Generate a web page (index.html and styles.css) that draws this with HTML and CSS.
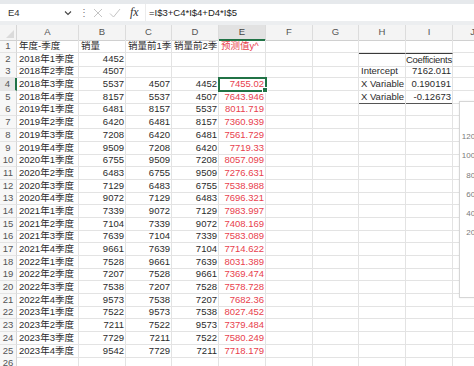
FILE: index.html
```html
<!DOCTYPE html>
<html lang="zh">
<head>
<meta charset="utf-8">
<title>Sheet</title>
<link rel="stylesheet" href="styles.css">
</head>
<body>
<div class="topstrip"></div>
<div class="fbar">
  <div class="namebox">E4</div>
  <svg class="chev" width="8" height="6" viewBox="0 0 8 6"><path d="M1 1.5 L4 4.5 L7 1.5" fill="none" stroke="#444" stroke-width="1.1"/></svg>
  <span class="dots">⋮</span>
  <svg class="ico" width="10" height="10" viewBox="0 0 10 10"><path d="M1 1 L9 9 M9 1 L1 9" stroke="#c4c4c4" stroke-width="1"/></svg>
  <svg class="ico" width="12" height="10" viewBox="0 0 12 10"><path d="M1 5.5 L4.5 9 L11 1" fill="none" stroke="#c4c4c4" stroke-width="1"/></svg>
  <span class="fx">fx</span>
  <div class="formula">=I$3+C4*I$4+D4*I$5</div>
</div>
<div class="band"></div>
<div class="sheet">
  <div class="row head"><span class="corner"></span><span class="ch">A</span><span class="ch">B</span><span class="ch">C</span><span class="ch">D</span><span class="ch sel">E</span><span class="ch">F</span><span class="ch">G</span><span class="ch">H</span><span class="ch">I</span><span class="ch">J</span></div>
  <div class="row"><span class="rn">1</span><span class="c">年度-季度</span><span class="c">销量</span><span class="c">销量前1季</span><span class="c">销量前2季</span><span class="c red">预测值y^</span><span class="c"></span><span class="c"></span><span class="c"></span><span class="c"></span><span class="c"></span></div>
  <div class="row"><span class="rn">2</span><span class="c">2018年1季度</span><span class="c n">4452</span><span class="c"></span><span class="c"></span><span class="c"></span><span class="c"></span><span class="c"></span><span class="c tt"></span><span class="c tt n coef">Coefficients</span><span class="c"></span></div>
  <div class="row"><span class="rn">3</span><span class="c">2018年2季度</span><span class="c n">4507</span><span class="c"></span><span class="c"></span><span class="c"></span><span class="c"></span><span class="c"></span><span class="c">Intercept</span><span class="c n">7162.011</span><span class="c"></span></div>
  <div class="row"><span class="rn sel">4</span><span class="c">2018年3季度</span><span class="c n">5537</span><span class="c n">4507</span><span class="c n">4452</span><span class="c n red active">7455.02</span><span class="c"></span><span class="c"></span><span class="c">X Variable</span><span class="c n">0.190191</span><span class="c"></span></div>
  <div class="row"><span class="rn">5</span><span class="c">2018年4季度</span><span class="c n">8157</span><span class="c n">5537</span><span class="c n">4507</span><span class="c n red">7643.946</span><span class="c"></span><span class="c"></span><span class="c tb">X Variable</span><span class="c n tb">-0.12673</span><span class="c"></span></div>
  <div class="row"><span class="rn">6</span><span class="c">2019年1季度</span><span class="c n">6481</span><span class="c n">8157</span><span class="c n">5537</span><span class="c n red">8011.719</span><span class="c"></span><span class="c"></span><span class="c"></span><span class="c"></span><span class="c"></span></div>
  <div class="row"><span class="rn">7</span><span class="c">2019年2季度</span><span class="c n">6420</span><span class="c n">6481</span><span class="c n">8157</span><span class="c n red">7360.939</span><span class="c"></span><span class="c"></span><span class="c"></span><span class="c"></span><span class="c"></span></div>
  <div class="row"><span class="rn">8</span><span class="c">2019年3季度</span><span class="c n">7208</span><span class="c n">6420</span><span class="c n">6481</span><span class="c n red">7561.729</span><span class="c"></span><span class="c"></span><span class="c"></span><span class="c"></span><span class="c"></span></div>
  <div class="row"><span class="rn">9</span><span class="c">2019年4季度</span><span class="c n">9509</span><span class="c n">7208</span><span class="c n">6420</span><span class="c n red">7719.33</span><span class="c"></span><span class="c"></span><span class="c"></span><span class="c"></span><span class="c"></span></div>
  <div class="row"><span class="rn">10</span><span class="c">2020年1季度</span><span class="c n">6755</span><span class="c n">9509</span><span class="c n">7208</span><span class="c n red">8057.099</span><span class="c"></span><span class="c"></span><span class="c"></span><span class="c"></span><span class="c"></span></div>
  <div class="row"><span class="rn">11</span><span class="c">2020年2季度</span><span class="c n">6483</span><span class="c n">6755</span><span class="c n">9509</span><span class="c n red">7276.631</span><span class="c"></span><span class="c"></span><span class="c"></span><span class="c"></span><span class="c"></span></div>
  <div class="row"><span class="rn">12</span><span class="c">2020年3季度</span><span class="c n">7129</span><span class="c n">6483</span><span class="c n">6755</span><span class="c n red">7538.988</span><span class="c"></span><span class="c"></span><span class="c"></span><span class="c"></span><span class="c"></span></div>
  <div class="row"><span class="rn">13</span><span class="c">2020年4季度</span><span class="c n">9072</span><span class="c n">7129</span><span class="c n">6483</span><span class="c n red">7696.321</span><span class="c"></span><span class="c"></span><span class="c"></span><span class="c"></span><span class="c"></span></div>
  <div class="row"><span class="rn">14</span><span class="c">2021年1季度</span><span class="c n">7339</span><span class="c n">9072</span><span class="c n">7129</span><span class="c n red">7983.997</span><span class="c"></span><span class="c"></span><span class="c"></span><span class="c"></span><span class="c"></span></div>
  <div class="row"><span class="rn">15</span><span class="c">2021年2季度</span><span class="c n">7104</span><span class="c n">7339</span><span class="c n">9072</span><span class="c n red">7408.169</span><span class="c"></span><span class="c"></span><span class="c"></span><span class="c"></span><span class="c"></span></div>
  <div class="row"><span class="rn">16</span><span class="c">2021年3季度</span><span class="c n">7639</span><span class="c n">7104</span><span class="c n">7339</span><span class="c n red">7583.089</span><span class="c"></span><span class="c"></span><span class="c"></span><span class="c"></span><span class="c"></span></div>
  <div class="row"><span class="rn">17</span><span class="c">2021年4季度</span><span class="c n">9661</span><span class="c n">7639</span><span class="c n">7104</span><span class="c n red">7714.622</span><span class="c"></span><span class="c"></span><span class="c"></span><span class="c"></span><span class="c"></span></div>
  <div class="row"><span class="rn">18</span><span class="c">2022年1季度</span><span class="c n">7528</span><span class="c n">9661</span><span class="c n">7639</span><span class="c n red">8031.389</span><span class="c"></span><span class="c"></span><span class="c"></span><span class="c"></span><span class="c"></span></div>
  <div class="row"><span class="rn">19</span><span class="c">2022年2季度</span><span class="c n">7207</span><span class="c n">7528</span><span class="c n">9661</span><span class="c n red">7369.474</span><span class="c"></span><span class="c"></span><span class="c"></span><span class="c"></span><span class="c"></span></div>
  <div class="row"><span class="rn">20</span><span class="c">2022年3季度</span><span class="c n">7538</span><span class="c n">7207</span><span class="c n">7528</span><span class="c n red">7578.728</span><span class="c"></span><span class="c"></span><span class="c"></span><span class="c"></span><span class="c"></span></div>
  <div class="row"><span class="rn">21</span><span class="c">2022年4季度</span><span class="c n">9573</span><span class="c n">7538</span><span class="c n">7207</span><span class="c n red">7682.36</span><span class="c"></span><span class="c"></span><span class="c"></span><span class="c"></span><span class="c"></span></div>
  <div class="row"><span class="rn">22</span><span class="c">2023年1季度</span><span class="c n">7522</span><span class="c n">9573</span><span class="c n">7538</span><span class="c n red">8027.452</span><span class="c"></span><span class="c"></span><span class="c"></span><span class="c"></span><span class="c"></span></div>
  <div class="row"><span class="rn">23</span><span class="c">2023年2季度</span><span class="c n">7211</span><span class="c n">7522</span><span class="c n">9573</span><span class="c n red">7379.484</span><span class="c"></span><span class="c"></span><span class="c"></span><span class="c"></span><span class="c"></span></div>
  <div class="row"><span class="rn">24</span><span class="c">2023年3季度</span><span class="c n">7729</span><span class="c n">7211</span><span class="c n">7522</span><span class="c n red">7580.249</span><span class="c"></span><span class="c"></span><span class="c"></span><span class="c"></span><span class="c"></span></div>
  <div class="row"><span class="rn">25</span><span class="c">2023年4季度</span><span class="c n">9542</span><span class="c n">7729</span><span class="c n">7211</span><span class="c n red">7718.179</span><span class="c"></span><span class="c"></span><span class="c"></span><span class="c"></span><span class="c"></span></div>
  <div class="row"><span class="rn">26</span><span class="c"></span><span class="c"></span><span class="c"></span><span class="c"></span><span class="c"></span><span class="c"></span><span class="c"></span><span class="c"></span><span class="c"></span><span class="c"></span></div>
</div>
<div class="chart">
  <span class="tick">12000</span>
  <span class="tick">10000</span>
  <span class="tick">8000</span>
  <span class="tick">6000</span>
  <span class="tick">4000</span>
  <span class="tick">2000</span>
</div>
</body>
</html>
```
FILE: styles.css
```css
html, body {
  margin: 0;
  padding: 0;
}
body {
  width: 474px;
  height: 366px;
  overflow: hidden;
  position: relative;
  background: #fff;
  font-family: "Liberation Sans", "Noto Sans CJK SC", sans-serif;
  font-size: 9.5px;
  color: #2b2b2b;
}
.topstrip {
  height: 4px;
  background: #e6e9ec;
}
.fbar {
  height: 17px;
  display: flex;
  align-items: center;
  background: #fff;
}
.namebox {
  width: 56px;
  padding-left: 8px;
  color: #333;
}
.dots {
  margin-left: 7px;
  color: #777;
  font-size: 10px;
  width: 8px;
}
.ico {
  margin-left: 6px;
}
.fx {
  margin-left: 9px;
  font-family: "Liberation Serif", serif;
  font-style: italic;
  font-size: 12px;
  color: #333;
  width: 13px;
}
.formula {
  margin-left: 2px;
  padding-left: 3px;
  border-left: 1px solid #ececec;
  height: 17px;
  line-height: 17px;
  flex: 1;
  color: #222;
}
.band {
  height: 4px;
  background: #eceef0;
}
.sheet {
  display: flex;
  flex-direction: column;
}
.row {
  display: grid;
  grid-template-columns: 17px 62px 47px 46px 47px 47px 47px 46px 47px 47px 40px;
  height: 12.7px;
  line-height: 12px;
}
.row.head {
  height: 15px;
  line-height: 14px;
  background: #f4f4f4;
}
.corner {
  position: relative;
  border-right: 1px solid #d6d6d6;
  border-bottom: 1px solid #d0d0d0;
}
.corner::after {
  content: "";
  position: absolute;
  right: 2px;
  bottom: 2px;
  border-style: solid;
  border-width: 0 0 8px 8px;
  border-color: transparent transparent #dadada transparent;
}
.ch {
  text-align: center;
  color: #555;
  border-right: 1px solid #dcdcdc;
  border-bottom: 1px solid #d0d0d0;
}
.ch.sel {
  background: #e2e2e2;
  color: #444;
  border-bottom: 2px solid #217346;
}
.rn {
  text-align: center;
  color: #555;
  background: #f7f7f7;
  border-right: 1px solid #d6d6d6;
  border-bottom: 1px solid #e4e4e4;
  white-space: nowrap;
}
.rn.sel {
  background: #e6e6e6;
  border-right: 2px solid #217346;
}
.c {
  border-right: 1px solid #e3e3e3;
  border-bottom: 1px solid #e3e3e3;
  padding: 0 1px 0 2px;
  white-space: nowrap;
  overflow: hidden;
}
.c.n {
  text-align: right;
}
.c.red {
  color: #e8414d;
}
.c.tt {
  border-top: 1px solid #3a3a3a;
}
.c.tb {
  border-bottom: 1px solid #555;
}
.c.coef {
  letter-spacing: -0.3px;
  padding-left: 0;
  overflow: visible;
}
.c.active {
  position: relative;
  overflow: visible;
  outline: 2px solid #217346;
  outline-offset: -1px;
}
.c.active::after {
  content: "";
  position: absolute;
  right: -3px;
  bottom: -3px;
  width: 4px;
  height: 4px;
  background: #217346;
  border: 1px solid #fff;
}
.chart {
  position: absolute;
  left: 459px;
  top: 101px;
  width: 60px;
  height: 197px;
  background: #fff;
  border: 1px solid #d6d6d6;
  box-shadow: 0 0 2px rgba(0,0,0,0.08);
  display: flex;
  flex-direction: column;
  align-items: flex-end;
  padding-top: 25px;
  padding-right: 34px;
  box-sizing: border-box;
}
.tick {
  font-family: "Liberation Sans", sans-serif;
  font-size: 8px;
  line-height: 19.3px;
  color: #7a7a7a;
}
```
